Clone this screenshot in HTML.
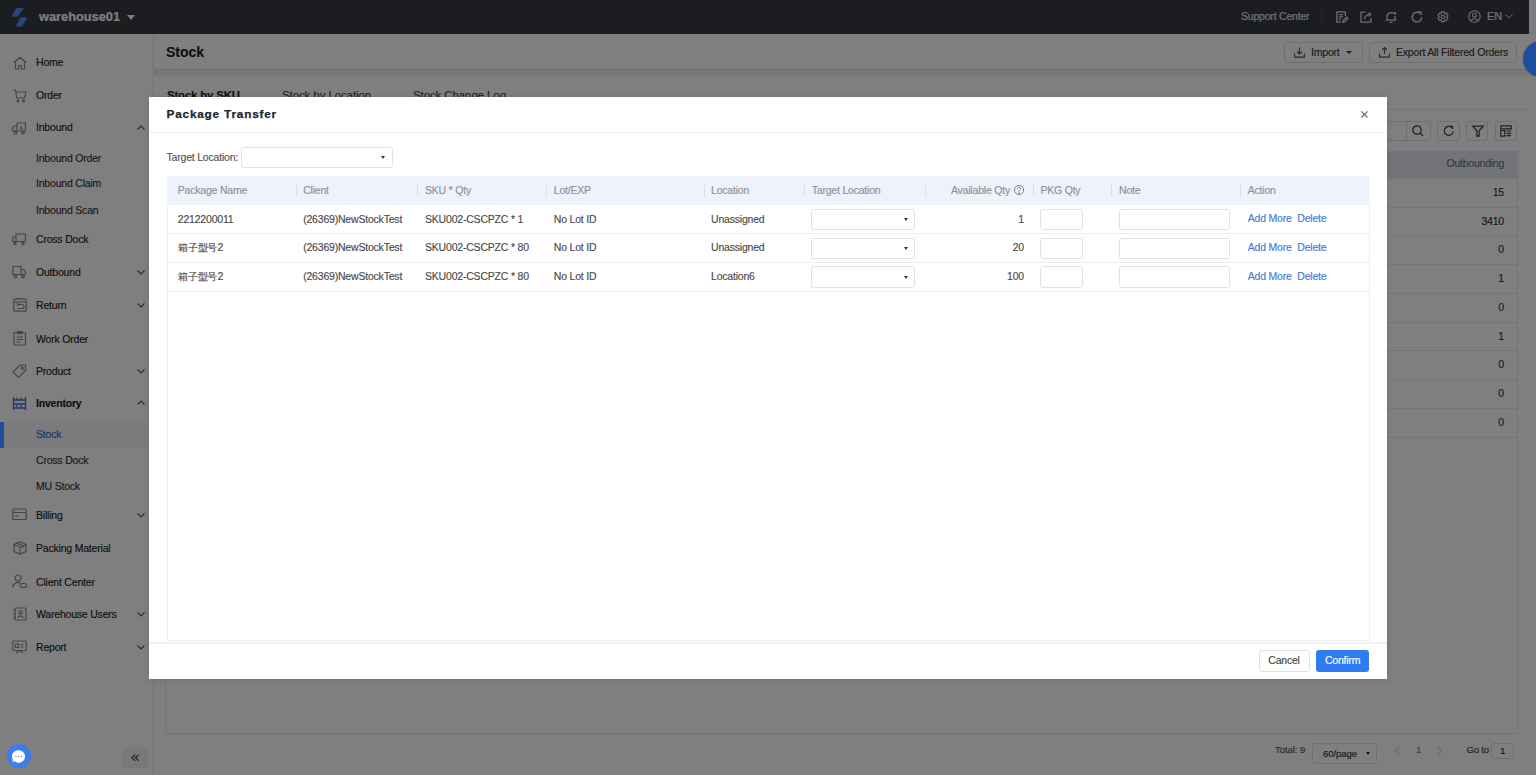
<!DOCTYPE html>
<html><head><meta charset="utf-8">
<style>
*{box-sizing:border-box;margin:0;padding:0}
html,body{width:1536px;height:775px;overflow:hidden}
body{font-family:"Liberation Sans",sans-serif;font-size:10.5px;letter-spacing:-0.2px;color:#4a4a4a;background:#eff1f4;position:relative}
.a{position:absolute}
.t{position:absolute;white-space:nowrap;line-height:12px;-webkit-text-stroke:0.15px currentColor}
svg{position:absolute;overflow:visible}
/* topbar */
#top{left:0;top:0;width:1529px;height:34px;background:#383b43}
#rstrip{left:1529px;top:0;width:7px;height:34px;background:#f7f8fa}
/* sidebar */
#side{left:0;top:34px;width:154px;height:741px;background:#fff;border-right:1px solid #e4e6ea;box-shadow:2px 0 4px rgba(0,0,0,.05)}
.mi{color:#222;left:36px}
.sub{color:#333;left:36px}
.chev{position:absolute;left:137px;width:8px;height:5px}
/* content */
#hdr{left:154px;top:34px;width:1382px;height:35px;background:#fff;box-shadow:0 1px 2px rgba(0,0,0,.06)}
.btn{position:absolute;background:#fff;border:1px solid #dcdfe6;border-radius:3px}
#card{left:154px;top:76px;width:1382px;height:699px;background:#fff}
#mask{left:0;top:0;width:1536px;height:775px;background:rgba(0,0,0,.5)}
#modal{left:149px;top:97px;width:1238px;height:582px;background:#fff;box-shadow:0 1px 6px rgba(0,0,0,.12)}
.th{color:#8d9199}
.sel{position:absolute;background:#fff;border:1px solid #dfe1e6;border-radius:2.5px}
.sel:after{content:"";position:absolute;right:6.5px;top:50%;margin-top:-1.5px;border-left:2.6px solid transparent;border-right:2.6px solid transparent;border-top:3.6px solid #333}
.inp{position:absolute;background:#fff;border:1px solid #dfe1e6;border-radius:2.5px}
.vd{position:absolute;width:1px;height:13px;background:#dcdfe6}
.lnk{color:#4a78d0;margin-top:-0.5px}
</style></head><body>

<!-- ================= TOP BAR ================= -->
<div id="top" class="a">
  <svg style="left:0;top:0" width="40" height="34"><polygon points="16.7,8.1 24,8.1 17.5,16.7 11.2,16.7" fill="#4f8ef7"/><polygon points="21,17.3 27.4,17.6 22.1,26.8 15.6,26.4" fill="#4f8ef7"/></svg>
  <div class="t" style="left:39px;top:9.8px;font-size:12.8px;font-weight:700;letter-spacing:0;line-height:14px;color:#fff">warehouse01</div>
  <div class="a" style="left:127px;top:14.8px;width:0;height:0;border-left:4.5px solid transparent;border-right:4.5px solid transparent;border-top:5px solid #fff"></div>
  <div class="t" style="left:1241px;top:9.8px;color:#e6e6e6">Support Center</div>
  <div class="a" style="left:1321px;top:10px;width:1px;height:14px;background:#4a4d55"></div>
  <!-- icons -->
  <svg style="left:1336px;top:11px" width="12" height="12" fill="none" stroke="#ddd" stroke-width="1.3"><path d="M9.3 5V1.6a.8.8 0 0 0-.8-.8H1.6a.8.8 0 0 0-.8.8v9.3h4.5"/><path d="M3 3.6h4M3 5.9h4M3 8.2h2"/><path d="M7 11.2l.4-1.8 3.2-3.2 1.3 1.3-3.2 3.2z"/></svg>
  <svg style="left:1360px;top:11px" width="12" height="12" fill="none" stroke="#ddd" stroke-width="1.3"><path d="M5.5 1.2H1v10h10V7"/><path d="M4.5 8.2c.6-3.2 2.7-4.8 6-4.8"/><path d="M8.7 1.4l2 2-2 2"/></svg>
  <svg style="left:1385px;top:11px" width="12" height="12" fill="none" stroke="#ddd" stroke-width="1.3"><path d="M2 9V5.8A4 4 0 0 1 8.3 2.4"/><path d="M10 5v4M0.8 9.2h10.4M4.5 11.3h3"/><circle cx="9.9" cy="2.4" r="1.3" fill="#ddd" stroke="none"/></svg>
  <svg style="left:1410.5px;top:11px" width="12" height="12" fill="none" stroke="#ddd" stroke-width="1.4"><path d="M10.8 6.3A4.8 4.8 0 1 1 8.8 2.2"/><path d="M7.2 1h2.8v2.9"/></svg>
  <svg style="left:1437px;top:11px" width="12" height="12" fill="none" stroke="#ddd" stroke-width="1.2"><path d="M4.6 0.9h2.8l.5 1.6 1.6-.4 1.4 2.4-1.1 1.2 1.1 1.3-1.4 2.4-1.6-.4-.5 1.6H4.6l-.5-1.6-1.6.4L1.1 7l1.1-1.3L1.1 4.5l1.4-2.4 1.6.4z"/><circle cx="6" cy="5.8" r="1.8"/></svg>
  <svg style="left:1468px;top:10px" width="13" height="13" fill="none" stroke="#ddd" stroke-width="1.1"><circle cx="6.5" cy="6.5" r="5.7"/><circle cx="6.5" cy="5" r="2"/><path d="M3 10.8a4 4 0 0 1 7 0"/></svg>
  <div class="t" style="left:1487px;top:10px;color:#e6e6e6;font-size:11px">EN</div>
  <svg style="left:1505px;top:14px" width="8" height="5" fill="none" stroke="#ddd" stroke-width="1"><path d="M0.5 0.5l3.5 3.5 3.5-3.5"/></svg>
</div>
<div id="rstrip" class="a"></div>

<!-- ================= SIDEBAR ================= -->
<div id="side" class="a"></div>
<div class="a" style="left:0;top:421.5px;width:153px;height:26.5px;background:#f5f7f8"></div>

<div id="sideitems">
  <!-- icons, stroke gray -->
  <svg style="left:13px;top:56px" width="14" height="14" fill="none" stroke="#8a8a8a" stroke-width="1.2"><path d="M1 6.5L7 1.2l6 5.3M2.5 5.5V13h3.2V9.5h2.6V13h3.2V5.5"/></svg>
  <div class="t mi" style="top:56.2px">Home</div>
  <svg style="left:13px;top:89px" width="14" height="14" fill="none" stroke="#8a8a8a" stroke-width="1.2"><path d="M0.5 1h2l1.3 8h8l1.2-6H3"/><circle cx="5" cy="11.8" r="1"/><circle cx="10.5" cy="11.8" r="1"/></svg>
  <div class="t mi" style="top:89.1px">Order</div>
  <svg style="left:12px;top:121px" width="15" height="14" fill="none" stroke="#8a8a8a" stroke-width="1.2"><path d="M5 2h8.5v8H5zM5 5H2l-1.5 3v2H5"/><circle cx="3.5" cy="11.5" r="1.3"/><circle cx="11" cy="11.5" r="1.3"/><path d="M9 4.5v3.5h2"/></svg>
  <div class="t mi" style="top:121.4px">Inbound</div>
  <svg class="chev" style="top:124.5px" width="8" height="5" fill="none" stroke="#555" stroke-width="1.1"><path d="M0.5 4.5l3.5-3.5 3.5 3.5"/></svg>
  <div class="t sub" style="top:151.7px">Inbound Order</div>
  <div class="t sub" style="top:177.4px">Inbound Claim</div>
  <div class="t sub" style="top:203.9px">Inbound Scan</div>
  <svg style="left:12px;top:232px" width="15" height="14" fill="none" stroke="#8a8a8a" stroke-width="1.2"><path d="M4 2h9.5v7.5H4zM4 5H1.5L0.6 7.5V9.5H4"/><circle cx="3" cy="11.5" r="1.2"/><circle cx="11" cy="11.5" r="1.2"/></svg>
  <div class="t mi" style="top:232.9px">Cross Dock</div>
  <svg style="left:12px;top:265px" width="15" height="14" fill="none" stroke="#8a8a8a" stroke-width="1.2"><path d="M1 1.5h8v8H1zM9 4.5h2.5l2 2.5v2.5H9"/><circle cx="3.5" cy="11.5" r="1.3"/><circle cx="11" cy="11.5" r="1.3"/></svg>
  <div class="t mi" style="top:265.8px">Outbound</div>
  <svg class="chev" style="top:269.5px" width="8" height="5" fill="none" stroke="#555" stroke-width="1.1"><path d="M0.5 0.5l3.5 3.5 3.5-3.5"/></svg>
  <svg style="left:13px;top:298px" width="14" height="14" fill="none" stroke="#8a8a8a" stroke-width="1.2"><rect x="0.8" y="0.8" width="12.4" height="12.4" rx="1"/><path d="M0.8 4h12.4M4 6.5h5a2 2 0 0 1 0 4H4M4 6.5l1.5-1.3M4 6.5l1.5 1.3"/></svg>
  <div class="t mi" style="top:298.8px">Return</div>
  <svg class="chev" style="top:302.5px" width="8" height="5" fill="none" stroke="#555" stroke-width="1.1"><path d="M0.5 0.5l3.5 3.5 3.5-3.5"/></svg>
  <svg style="left:13px;top:331px" width="14" height="15" fill="none" stroke="#8a8a8a" stroke-width="1.2"><rect x="1" y="1.5" width="11.5" height="12.5" rx="1"/><path d="M4.5 0.6h4.5v2H4.5zM3.5 6h6.5M3.5 8.5h6.5M3.5 11h4"/></svg>
  <div class="t mi" style="top:332.6px">Work Order</div>
  <svg style="left:12px;top:364px" width="15" height="15" fill="none" stroke="#8a8a8a" stroke-width="1.2"><path d="M8 1h5.5v5.5L6.5 13.5 1 8z"/><circle cx="10.3" cy="4.2" r="1.2"/></svg>
  <div class="t mi" style="top:364.9px">Product</div>
  <svg class="chev" style="top:368.5px" width="8" height="5" fill="none" stroke="#555" stroke-width="1.1"><path d="M0.5 0.5l3.5 3.5 3.5-3.5"/></svg>
  <svg style="left:12px;top:396px" width="15" height="15" fill="none" stroke="#3b6fd8" stroke-width="1.3"><path d="M1.5 1v13M13.5 1v13M1.5 4h12M1.5 8h12M1.5 12h12M5 1.5v2M9 1.5v2M5 9v2M9 9v2"/></svg>
  <div class="t mi" style="top:397.4px;font-weight:700;color:#1a1a1a">Inventory</div>
  <svg class="chev" style="top:399.5px" width="8" height="5" fill="none" stroke="#555" stroke-width="1.1"><path d="M0.5 4.5l3.5-3.5 3.5 3.5"/></svg>
  <div class="t sub" style="top:428.2px;color:#3566d0">Stock</div>
  <div class="t sub" style="top:454.4px">Cross Dock</div>
  <div class="t sub" style="top:479.9px">MU Stock</div>
  <svg style="left:12px;top:508px" width="15" height="13" fill="none" stroke="#8a8a8a" stroke-width="1.2"><rect x="0.8" y="1" width="13.4" height="10.5" rx="1"/><path d="M0.8 4.5h13.4M3 8h4"/></svg>
  <div class="t mi" style="top:508.9px">Billing</div>
  <svg class="chev" style="top:512.5px" width="8" height="5" fill="none" stroke="#555" stroke-width="1.1"><path d="M0.5 0.5l3.5 3.5 3.5-3.5"/></svg>
  <svg style="left:13px;top:541px" width="14" height="14" fill="none" stroke="#8a8a8a" stroke-width="1.2"><path d="M7 0.8l6 2.7v7L7 13.2 1 10.5v-7zM1 3.5l6 2.7 6-2.7M7 6.2v7M4 2.2l6 2.7v2.5"/></svg>
  <div class="t mi" style="top:541.8px">Packing Material</div>
  <svg style="left:12px;top:574px" width="16" height="15" fill="none" stroke="#8a8a8a" stroke-width="1.2"><circle cx="6" cy="4" r="3"/><path d="M0.8 13.5a5.2 5.2 0 0 1 8-4.3"/><rect x="8.5" y="9.5" width="6" height="4" rx="2"/></svg>
  <div class="t mi" style="top:575.9px">Client Center</div>
  <svg style="left:12px;top:607px" width="15" height="14" fill="none" stroke="#8a8a8a" stroke-width="1.2"><rect x="3" y="1" width="11" height="12" rx="1"/><path d="M0.8 3.5h3M0.8 7h3M0.8 10.5h3"/><circle cx="8.5" cy="5.5" r="1.7"/><path d="M5.8 11a2.8 2.8 0 0 1 5.4 0"/></svg>
  <div class="t mi" style="top:608.1px">Warehouse Users</div>
  <svg class="chev" style="top:611.5px" width="8" height="5" fill="none" stroke="#555" stroke-width="1.1"><path d="M0.5 0.5l3.5 3.5 3.5-3.5"/></svg>
  <svg style="left:12px;top:640px" width="15" height="14" fill="none" stroke="#8a8a8a" stroke-width="1.2"><rect x="0.8" y="1" width="13.4" height="9.5" rx="1"/><path d="M4 13l3.5-2.5L11 13M3.5 4h3v3.5h-3zM8.5 4.5h3M8.5 7h3"/></svg>
  <div class="t mi" style="top:641.4px">Report</div>
  <svg class="chev" style="top:644.5px" width="8" height="5" fill="none" stroke="#555" stroke-width="1.1"><path d="M0.5 0.5l3.5 3.5 3.5-3.5"/></svg>
  <!-- collapse button -->
  <div class="a" style="left:123px;top:747.5px;width:25px;height:20px;background:#f2f3f5;border-radius:2px"></div>
  <svg style="left:131px;top:754px" width="9" height="8" fill="none" stroke="#555" stroke-width="1.4"><path d="M4 0.8L1 3.8l3 3M7.6 0.8L4.6 3.8l3 3"/></svg>
</div>

<!-- ================= CONTENT ================= -->
<div id="hdr" class="a">
  <div class="t" style="left:12px;top:10.2px;font-size:14px;font-weight:700;letter-spacing:0;line-height:16px;color:#1f2329">Stock</div>
</div>
<div class="btn" style="left:1284px;top:42px;width:79px;height:21px">
  <svg style="left:9px;top:4px" width="11" height="11" fill="none" stroke="#555" stroke-width="1.1"><path d="M5.5 0.5v6.5M3 4.5l2.5 2.5L8 4.5M0.6 6.5v3.6h9.8V6.5"/></svg>
  <div class="t" style="left:26px;top:3px;color:#333">Import</div>
  <div class="a" style="left:61px;top:8px;border-left:3px solid transparent;border-right:3px solid transparent;border-top:3.5px solid #444"></div>
</div>
<div class="btn" style="left:1369px;top:42px;width:148px;height:21px">
  <svg style="left:9px;top:4px" width="11" height="11" fill="none" stroke="#555" stroke-width="1.1"><path d="M5.5 7V0.8M3 3l2.5-2.5L8 3M0.6 6.5v3.6h9.8V6.5"/></svg>
  <div class="t" style="left:26px;top:3px;color:#333">Export All Filtered Orders</div>
</div>


<div id="card" class="a">
  <div class="t" style="left:13px;top:13px;font-size:11.3px;letter-spacing:-0.1px;font-weight:700;color:#222">Stock by SKU</div>
  <div class="t" style="left:128px;top:13px;font-size:11.4px;letter-spacing:-0.05px;color:#444">Stock by Location</div>
  <div class="t" style="left:259px;top:13px;font-size:11.4px;letter-spacing:-0.05px;color:#444">Stock Change Log</div>
  <div class="a" style="left:0;top:33px;width:1375px;height:1px;background:#e8e8e8"></div>
</div>
<!-- toolbar -->
<div class="inp" style="left:1250px;top:120.5px;width:157px;height:20.5px;border-radius:3px 0 0 3px"></div>
<div class="btn" style="left:1406px;top:120.5px;width:24.5px;height:20.5px;border-radius:0 3px 3px 0">
  <svg style="left:4.5px;top:3.5px" width="12" height="12" fill="none" stroke="#444" stroke-width="1.3"><circle cx="5" cy="5" r="4.2"/><path d="M8 8l3 3"/></svg>
</div>
<div class="btn" style="left:1437px;top:120.5px;width:22.5px;height:20.5px">
  <svg style="left:4.5px;top:3.5px" width="12" height="12" fill="none" stroke="#444" stroke-width="1.3"><path d="M10.3 6.2A4.5 4.5 0 1 1 8.8 2.5"/><path d="M7 1.5h2.5V4"/></svg>
</div>
<div class="btn" style="left:1466px;top:120.5px;width:22px;height:20.5px">
  <svg style="left:4.5px;top:3.5px" width="12" height="12" fill="none" stroke="#444" stroke-width="1.3"><path d="M0.8 1.2h10.4L7.1 5.8v5.2H4.9V5.8z"/></svg>
</div>
<div class="btn" style="left:1494.5px;top:120.5px;width:22.5px;height:20.5px">
  <svg style="left:4.5px;top:3.5px" width="12" height="12" fill="none" stroke="#444" stroke-width="1.2"><path d="M0.8 0.8h10.4v3H0.8zM0.8 5.5h4v5.7h-4zM6.5 6h4.7M6.5 8.3h4.7M6.5 10.6h4.7"/></svg>
</div>
<!-- background table -->
<div class="a" style="left:165px;top:150.5px;width:1352px;height:28px;background:#e4e9f3"></div>
<div class="t" style="left:1420px;top:157px;width:84px;text-align:right;color:#6f737a;letter-spacing:-0.25px">Outbounding</div>
<div class="a" style="left:1517px;top:156px;width:1px;height:15px;background:#d5d8de"></div>
<div class="t" style="left:1440px;top:185.8px;width:64px;text-align:right;color:#333">15</div>
<div class="a" style="left:165px;top:206.5px;width:1352px;height:1px;background:#e6e8ec"></div>
<div class="t" style="left:1440px;top:214.55px;width:64px;text-align:right;color:#333">3410</div>
<div class="a" style="left:165px;top:235.25px;width:1352px;height:1px;background:#e6e8ec"></div>
<div class="t" style="left:1440px;top:243.3px;width:64px;text-align:right;color:#333">0</div>
<div class="a" style="left:165px;top:264.0px;width:1352px;height:1px;background:#e6e8ec"></div>
<div class="t" style="left:1440px;top:272.05px;width:64px;text-align:right;color:#333">1</div>
<div class="a" style="left:165px;top:292.75px;width:1352px;height:1px;background:#e6e8ec"></div>
<div class="t" style="left:1440px;top:300.8px;width:64px;text-align:right;color:#333">0</div>
<div class="a" style="left:165px;top:321.5px;width:1352px;height:1px;background:#e6e8ec"></div>
<div class="t" style="left:1440px;top:329.55px;width:64px;text-align:right;color:#333">1</div>
<div class="a" style="left:165px;top:350.25px;width:1352px;height:1px;background:#e6e8ec"></div>
<div class="t" style="left:1440px;top:358.3px;width:64px;text-align:right;color:#333">0</div>
<div class="a" style="left:165px;top:379.0px;width:1352px;height:1px;background:#e6e8ec"></div>
<div class="t" style="left:1440px;top:387.05px;width:64px;text-align:right;color:#333">0</div>
<div class="a" style="left:165px;top:407.75px;width:1352px;height:1px;background:#e6e8ec"></div>
<div class="t" style="left:1440px;top:415.8px;width:64px;text-align:right;color:#333">0</div>
<div class="a" style="left:165px;top:436.5px;width:1352px;height:1px;background:#e6e8ec"></div>
<div class="a" style="left:165px;top:150.5px;width:1px;height:583px;background:#ebedf0"></div>
<div class="a" style="left:1516.5px;top:150.5px;width:1px;height:583px;background:#ebedf0"></div>
<div class="a" style="left:165px;top:733px;width:1352px;height:1px;background:#e4e6ea"></div>
<!-- pagination -->
<div class="t" style="left:1275px;top:743.7px;color:#555;font-size:9.6px;letter-spacing:-0.1px">Total: 9</div>
<div class="sel" style="left:1312px;top:742.5px;width:65px;height:21px"><div class="t" style="left:10px;top:4px;color:#333;font-size:9.6px;letter-spacing:-0.1px">60/page</div></div>
<svg style="left:1394px;top:746px" width="6" height="9" fill="none" stroke="#bbb" stroke-width="1"><path d="M5 0.5L1 4.5l4 4"/></svg>
<div class="t" style="left:1416px;top:744px;color:#5b7fc0;font-size:9.6px">1</div>
<svg style="left:1437px;top:746px" width="6" height="9" fill="none" stroke="#bbb" stroke-width="1"><path d="M1 0.5l4 4-4 4"/></svg>
<div class="t" style="left:1466.5px;top:743.7px;color:#444;font-size:9.6px;letter-spacing:-0.2px">Go to</div>
<div class="inp" style="left:1490.5px;top:742.5px;width:23px;height:16px"><div class="t" style="left:8.5px;top:1px;color:#333;font-size:9.6px">1</div></div>

<!-- ================= MASK ================= -->
<div id="mask" class="a"></div>

<!-- above mask -->
<div class="a" style="left:0;top:421.5px;width:4px;height:26.5px;background:#1f4b98"></div>
<div class="a" style="left:1523px;top:41px;width:36px;height:36px;border-radius:50%;background:#1d4d9e;box-shadow:0 0 2px rgba(0,0,0,.2)"></div>
<div class="a" style="left:7px;top:744px;width:24px;height:24px;border-radius:50%;background:#3b7cf0"></div>
<svg style="left:0;top:735px" width="40" height="40"><path d="M18.7 15.2a6.3 6.3 0 1 1-4.4 10.8l-2.2 1.5.9-2.6A6.3 6.3 0 0 1 18.7 15.2z" fill="#fff"/><circle cx="15.9" cy="21.6" r="0.75" fill="#8a8aa0"/><circle cx="18.7" cy="21.6" r="0.75" fill="#8a8aa0"/><circle cx="21.5" cy="21.6" r="0.75" fill="#8a8aa0"/></svg>

<!-- ================= MODAL ================= -->
<div id="modal" class="a">
  <div class="t" style="left:17.5px;top:10.3px;font-size:11.8px;font-weight:700;letter-spacing:0.8px;line-height:14px;color:#1d2433;-webkit-text-stroke:0.25px #1d2433">Package Transfer</div>
  <svg style="left:1211.5px;top:13.8px" width="8" height="8" fill="none" stroke="#666" stroke-width="1.1"><path d="M0.3 0.3l6.2 6.2M6.5 0.3L0.3 6.5"/></svg>
  <div class="a" style="left:0;top:34.5px;width:1238px;height:1px;background:#eeeff2"></div>
  <div class="t" style="left:17.5px;top:53.6px;color:#555">Target Location:</div>
  <div class="sel" style="left:92.3px;top:50.4px;width:151.5px;height:21px"></div>
  <!-- table -->
  <div class="a" style="left:17.5px;top:79px;width:1203px;height:465px;border:1px solid #eceef3"></div>
  <div class="a" style="left:17.5px;top:79px;width:1203px;height:28.5px;background:#eef2fb"></div>
  <div class="t th" style="left:28.8px;top:86.9px">Package Name</div>
  <div class="t th" style="left:154.2px;top:86.9px">Client</div>
  <div class="t th" style="left:276px;top:86.9px">SKU * Qty</div>
  <div class="t th" style="left:404.75px;top:86.9px">Lot/EXP</div>
  <div class="t th" style="left:562px;top:86.9px">Location</div>
  <div class="t th" style="left:662.7px;top:86.9px">Target Location</div>
  <div class="t th" style="left:891.4px;top:86.9px">PKG Qty</div>
  <div class="t th" style="left:970px;top:86.9px">Note</div>
  <div class="t th" style="left:1098.7px;top:86.9px">Action</div>
  <div class="t th" style="left:760px;top:86.9px;width:101px;text-align:right">Available Qty</div>
  <svg style="left:865px;top:88px" width="11" height="11" fill="none" stroke="#777" stroke-width="0.9"><circle cx="5" cy="5" r="4.6"/><path d="M3.4 3.9a1.6 1.6 0 1 1 2.3 1.4c-.5.3-.7.6-.7 1.1v.4"/><circle cx="5" cy="8" r="0.35" fill="#777"/></svg>
  <div class="vd" style="left:146.5px;top:87px"></div>
  <div class="vd" style="left:268.3px;top:87px"></div>
  <div class="vd" style="left:396.8px;top:87px"></div>
  <div class="vd" style="left:554.75px;top:87px"></div>
  <div class="vd" style="left:654.5px;top:87px"></div>
  <div class="vd" style="left:776.2px;top:87px"></div>
  <div class="vd" style="left:883.5px;top:87px"></div>
  <div class="vd" style="left:961.6px;top:87px"></div>
  <div class="vd" style="left:1090.8px;top:87px"></div>
  <div class="a" style="left:17.5px;top:135.9px;width:1203px;height:1px;background:#eceef3"></div>
  <div class="t" style="left:28.8px;top:115.6px">2212200011</div>
  <div class="t" style="left:154.2px;top:115.6px">(26369)NewStockTest</div>
  <div class="t" style="left:276px;top:115.6px">SKU002-CSCPZC * 1</div>
  <div class="t" style="left:404.75px;top:115.6px">No Lot ID</div>
  <div class="t" style="left:562px;top:115.6px">Unassigned</div>
  <div class="t" style="left:800px;top:115.6px;width:75px;text-align:right">1</div>
  <div class="sel" style="left:662.25px;top:111.75px;width:103.75px;height:21.5px"></div>
  <div class="inp" style="left:891.4px;top:111.75px;width:42.6px;height:21.5px"></div>
  <div class="inp" style="left:969.5px;top:111.75px;width:111px;height:21.5px"></div>
  <div class="t lnk" style="left:1098.7px;top:115.6px">Add More</div>
  <div class="t lnk" style="left:1148.3px;top:115.6px">Delete</div>
  <div class="a" style="left:17.5px;top:164.7px;width:1203px;height:1px;background:#eceef3"></div>
  <div class="t" style="left:28.8px;top:144.4px"><span style="font-size:9.9px;letter-spacing:-0.1px">箱子型号</span>2</div>
  <div class="t" style="left:154.2px;top:144.4px">(26369)NewStockTest</div>
  <div class="t" style="left:276px;top:144.4px">SKU002-CSCPZC * 80</div>
  <div class="t" style="left:404.75px;top:144.4px">No Lot ID</div>
  <div class="t" style="left:562px;top:144.4px">Unassigned</div>
  <div class="t" style="left:800px;top:144.4px;width:75px;text-align:right">20</div>
  <div class="sel" style="left:662.25px;top:140.55px;width:103.75px;height:21.5px"></div>
  <div class="inp" style="left:891.4px;top:140.55px;width:42.6px;height:21.5px"></div>
  <div class="inp" style="left:969.5px;top:140.55px;width:111px;height:21.5px"></div>
  <div class="t lnk" style="left:1098.7px;top:144.4px">Add More</div>
  <div class="t lnk" style="left:1148.3px;top:144.4px">Delete</div>
  <div class="a" style="left:17.5px;top:193.5px;width:1203px;height:1px;background:#eceef3"></div>
  <div class="t" style="left:28.8px;top:173.2px"><span style="font-size:9.9px;letter-spacing:-0.1px">箱子型号</span>2</div>
  <div class="t" style="left:154.2px;top:173.2px">(26369)NewStockTest</div>
  <div class="t" style="left:276px;top:173.2px">SKU002-CSCPZC * 80</div>
  <div class="t" style="left:404.75px;top:173.2px">No Lot ID</div>
  <div class="t" style="left:562px;top:173.2px">Location6</div>
  <div class="t" style="left:800px;top:173.2px;width:75px;text-align:right">100</div>
  <div class="sel" style="left:662.25px;top:169.35px;width:103.75px;height:21.5px"></div>
  <div class="inp" style="left:891.4px;top:169.35px;width:42.6px;height:21.5px"></div>
  <div class="inp" style="left:969.5px;top:169.35px;width:111px;height:21.5px"></div>
  <div class="t lnk" style="left:1098.7px;top:173.2px">Add More</div>
  <div class="t lnk" style="left:1148.3px;top:173.2px">Delete</div>
  <div class="a" style="left:0;top:545px;width:1238px;height:1.5px;background:#f0f1f3"></div>
  <div class="btn" style="left:1109.5px;top:553.3px;width:51px;height:21.4px"><div class="t" style="left:0;width:49px;text-align:center;top:2.6px;color:#444">Cancel</div></div>
  <div class="a" style="left:1167px;top:553.3px;width:53.2px;height:21.4px;background:#2f7bf2;border-radius:3px"><div class="t" style="left:0;width:53.2px;text-align:center;top:3.4px;color:#fff">Confirm</div></div>
</div>
</body></html>
